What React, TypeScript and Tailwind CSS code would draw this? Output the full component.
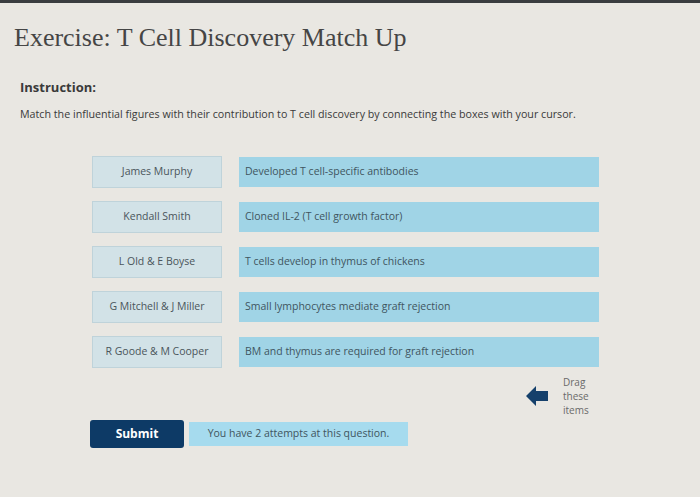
import type { FC } from "react";

const pairs = [
  ["James Murphy", "Developed T cell-specific antibodies"],
  ["Kendall Smith", "Cloned IL-2 (T cell growth factor)"],
  ["L Old & E Boyse", "T cells develop in thymus of chickens"],
  ["G Mitchell & J Miller", "Small lymphocytes mediate graft rejection"],
  ["R Goode & M Cooper", "BM and thymus are required for graft rejection"],
];

const Row: FC<{ name: string; text: string }> = ({ name, text }) => (
  <div className="flex items-center gap-[17px]">
    <div className="flex h-[32px] w-[130px] items-center justify-center border border-[#bfd3da] bg-[#d2e2e7] text-[10.5px] text-[#4a555b]">
      {name}
    </div>
    <div className="flex h-[30px] w-[360px] items-center bg-[#a0d4e6] pl-[6px] text-[10.5px] text-[#3f5560]">
      {text}
    </div>
  </div>
);

export default function App() {
  return (
    <div
      className="h-[497px] w-[700px] overflow-hidden bg-[#e9e7e2]"
      style={{ fontFamily: '"Open Sans", sans-serif' }}
    >
      <div className="h-[3px] bg-[#3a3d40]" />
      <div className="pl-[14px] pt-[20px]">
        <h1
          className="text-[26px] leading-[30px] text-[#454545]"
          style={{ fontFamily: '"Liberation Serif", serif' }}
        >
          Exercise: T Cell Discovery Match Up
        </h1>
        <div className="mt-[25px] pl-[6px] text-[13px] font-bold text-[#3a3a3a]">Instruction:</div>
        <p className="mt-[8px] pl-[6px] text-[10.7px] text-[#3a3a3a]">
          Match the influential figures with their contribution to T cell discovery by connecting the boxes with your cursor.
        </p>
      </div>
      <div className="mt-[34px] flex flex-col gap-[13px] pl-[92px]">
        {pairs.map(([n, t]) => (
          <Row key={n} name={n} text={t} />
        ))}
      </div>
      <div className="mt-[7px] flex items-center justify-end gap-[14px] pr-[105px]">
        <svg width="23" height="20" viewBox="0 0 23 20">
          <path d="M0 10 L10 0 L10 5 L22 5 L22 15 L10 15 L10 20 Z" fill="#15406b" />
        </svg>
        <div className="w-[32px] text-[10px] leading-[14px] text-[#6a6a6a]">Drag these items</div>
      </div>
      <div className="mt-[3px] flex items-center gap-[5px] pl-[90px]">
        <button className="h-[28px] w-[94px] rounded-[3px] bg-[#0d3a66] text-[12px] font-bold text-white">
          Submit
        </button>
        <div className="flex h-[24px] w-[219px] items-center justify-center bg-[#a6dbee] text-[10.5px] text-[#3f5560]">
          You have 2 attempts at this question.
        </div>
      </div>
    </div>
  );
}
